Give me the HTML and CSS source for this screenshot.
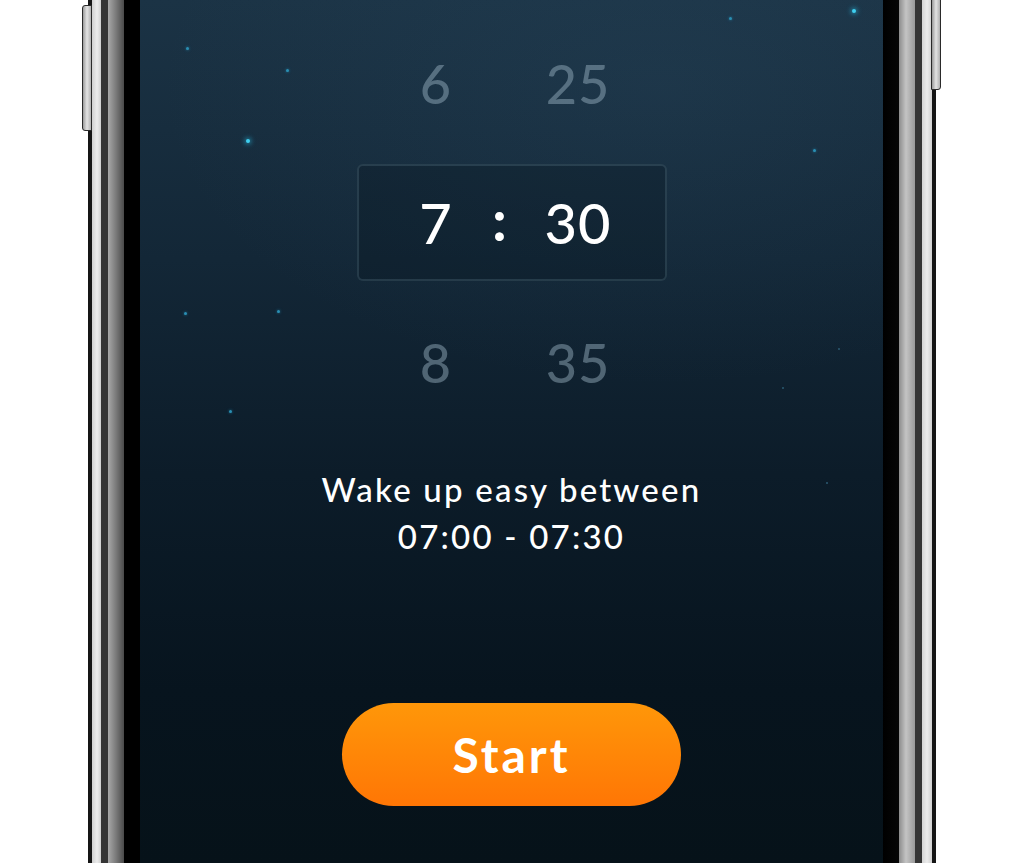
FILE: index.html
```html
<!DOCTYPE html>
<html lang="en">
<head>
    <meta charset="UTF-8">
    <title>Smart Alarm</title>

    <link rel="stylesheet" href="styles.css">
</head>
<body>

<div class="phone">
    <span class="side-btn left"></span>
    <span class="side-btn right"></span>

    <main class="screen">

        <!-- stars -->
        <div class="sky">
            <i class="star" style="left:46px;top:47px"></i>
            <i class="star" style="left:146px;top:69px"></i>
            <i class="star big" style="left:106px;top:139px"></i>
            <i class="star" style="left:44px;top:312px"></i>
            <i class="star" style="left:137px;top:310px"></i>
            <i class="star" style="left:89px;top:410px"></i>
            <i class="star" style="left:589px;top:17px"></i>
            <i class="star big" style="left:712px;top:9px"></i>
            <i class="star" style="left:673px;top:149px"></i>
            <i class="star dim" style="left:698px;top:348px"></i>
            <i class="star dim" style="left:642px;top:387px"></i>
            <i class="star dim" style="left:686px;top:482px"></i>
        </div>

        <div class="picker">
            <div class="row">
                <span>6</span>
                <span></span>
                <span>25</span>
            </div>
            <div class="row selected">
                <span>7</span>
                <span class="colon">:</span>
                <span>30</span>
            </div>
            <div class="row">
                <span>8</span>
                <span></span>
                <span>35</span>
            </div>
        </div>

        <p class="window">
            Wake up easy between<br>
            07:00 - 07:30
        </p>

        <button class="start">Start</button>

    </main>
</div>

</body>
</html>
```

FILE: styles.css
```css
body {
    margin: 0;
    height: 100vh;
    overflow: hidden;
    background-color: white;
    font-family: Lato, "Noto Sans", sans-serif;
}

/* phone body: rims drawn as hard colour stops */
.phone {
    position: relative;
    width: 848px;
    height: 100vh;
    margin-left: 88px;
    padding: 0 53px 0 52px;
    box-sizing: border-box;
    display: flex;
    background: linear-gradient(to right,
        #151515 0, #151515 4px,
        #cfcfcf 4px, #ececec 9px, #d0d0d0 13px,
        #353535 13px, #353535 20px,
        #a8a8a8 20px, #7a7a7a 28px, #4a4a4a 36px,
        #000 36px, #000 52px,
        #000 795px, #060606 811px,
        #8c8c8c 811px, #c4c4c4 818px, #9a9a9a 827px,
        #353535 827px, #353535 834px,
        #d4d4d4 834px, #ececec 839px, #d0d0d0 844px,
        #151515 844px, #151515 848px);
}

.side-btn {
    position: absolute;
    width: 8px;
    background: linear-gradient(to right, #9a9a9a, #e4e4e4, #b0b0b0);
    border: 1px solid #2a2a2a;
}

.side-btn.left {
    left: -6px;
    top: 5px;
    height: 124px;
    border-radius: 3px 0 0 3px;
}

.side-btn.right {
    right: -5px;
    top: -4px;
    height: 92px;
    border-radius: 0 3px 3px 0;
}

.screen {
    position: relative;
    flex: 1;
    display: flex;
    flex-direction: column;
    align-items: center;
    color: white;
    background:
        radial-gradient(ellipse 500px 300px at 70% 10%, rgba(60, 100, 130, 0.14), transparent),
        linear-gradient(to bottom, #1b3345 0, #132737 30%, #0c1c29 55%, #07141e 80%, #061219 100%);
    overflow: hidden;
}

.sky {
    position: absolute;
    inset: 0;
}

.star {
    position: absolute;
    width: 3px;
    height: 3px;
    border-radius: 50%;
    background-color: #2a8fb3;
    box-shadow: 0 0 3px rgba(40, 170, 220, 0.6);
}

.star.big {
    width: 4px;
    height: 4px;
    background-color: #3fd0f0;
    box-shadow: 0 0 5px 1px rgba(40, 190, 230, 0.7);
}

.star.dim {
    width: 2px;
    height: 2px;
    background-color: #2b5a72;
    box-shadow: none;
}

/* time picker */
.picker {
    position: relative;
    margin-top: 13px;
    display: flex;
    flex-direction: column;
    align-items: center;
}

.row {
    width: 310px;
    height: 140px;
    display: grid;
    grid-template-columns: 100px 28px 128px;
    justify-content: center;
    align-items: center;
    padding-left: 5px;
    box-sizing: border-box;
    text-align: center;
    font-size: 54px;
    font-weight: 500;
    color: rgba(160, 185, 200, 0.45);
    letter-spacing: 1px;
}

.row.selected {
    height: 117px;
    margin: 11px 0;
    border: 2px solid rgba(120, 150, 170, 0.22);
    border-radius: 6px;
    background-color: rgba(5, 15, 25, 0.25);
    color: white;
    font-size: 56px;
}

.colon {
    font-size: 58px;
    font-weight: bold;
    padding-bottom: 8px;
}

.window {
    position: relative;
    margin: 34px 0 0;
    font-size: 33px;
    font-weight: 500;
    line-height: 47px;
    letter-spacing: 2.2px;
    text-align: center;
}

.start {
    position: relative;
    margin-top: 143px;
    width: 339px;
    height: 103px;
    border: none;
    border-radius: 52px;
    background: linear-gradient(to bottom, #ff9709, #ff7605);
    color: white;
    font-family: Lato, "Noto Sans", sans-serif;
    font-size: 48px;
    font-weight: bold;
    letter-spacing: 3px;
    padding-left: 6px;
}
```
